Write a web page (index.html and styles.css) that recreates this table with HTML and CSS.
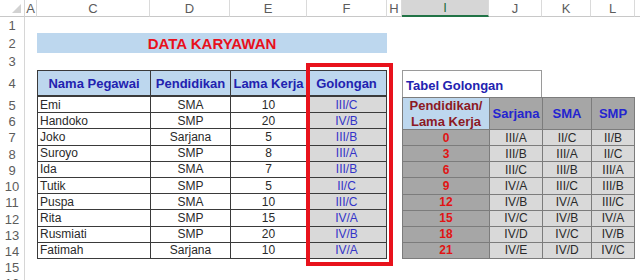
FILE: index.html
```html
<!DOCTYPE html>
<html>
<head>
<meta charset="utf-8">
<link rel="stylesheet" href="styles.css">
</head>
<body>
<div class="sheet">
  <div class="corner"><span class="tri"></span></div>
  <div class="ch">A</div>
  <div class="ch">C</div>
  <div class="ch">D</div>
  <div class="ch">E</div>
  <div class="ch">F</div>
  <div class="ch">H</div>
  <div class="ch sel">I</div>
  <div class="ch">J</div>
  <div class="ch">K</div>
  <div class="ch">L</div>
  <div class="ch rest"></div>

  <div class="rh">1</div>
  <div class="rh">2</div>
  <div class="rh">3</div>
  <div class="rh">4</div>
  <div class="rh">5</div>
  <div class="rh">6</div>
  <div class="rh">7</div>
  <div class="rh">8</div>
  <div class="rh">9</div>
  <div class="rh">10</div>
  <div class="rh">11</div>
  <div class="rh">12</div>
  <div class="rh">13</div>
  <div class="rh">14</div>
  <div class="rh">15</div>
  <div class="rh">16</div>

  <div class="title">DATA KARYAWAN</div>

  <div class="emp">
    <div class="h">Nama Pegawai</div><div class="h">Pendidikan</div><div class="h">Lama Kerja</div><div class="h">Golongan</div>
    <div class="c name">Emi</div><div class="c">SMA</div><div class="c">10</div><div class="c g">III/C</div>
    <div class="c name">Handoko</div><div class="c">SMP</div><div class="c">20</div><div class="c g">IV/B</div>
    <div class="c name">Joko</div><div class="c">Sarjana</div><div class="c">5</div><div class="c g">III/B</div>
    <div class="c name">Suroyo</div><div class="c">SMP</div><div class="c">8</div><div class="c g">III/A</div>
    <div class="c name">Ida</div><div class="c">SMA</div><div class="c">7</div><div class="c g">III/B</div>
    <div class="c name">Tutik</div><div class="c">SMP</div><div class="c">5</div><div class="c g">II/C</div>
    <div class="c name">Puspa</div><div class="c">SMA</div><div class="c">10</div><div class="c g">III/C</div>
    <div class="c name">Rita</div><div class="c">SMP</div><div class="c">15</div><div class="c g">IV/A</div>
    <div class="c name">Rusmiati</div><div class="c">SMP</div><div class="c">20</div><div class="c g">IV/B</div>
    <div class="c name">Fatimah</div><div class="c">Sarjana</div><div class="c">10</div><div class="c g">IV/A</div>
  </div>

  <div class="tg">Tabel Golongan</div>

  <div class="gol">
    <div class="hi">Pendidikan/<br>Lama Kerja</div><div class="hj">Sarjana</div><div class="hj">SMA</div><div class="hj">SMP</div>
    <div class="n">0</div><div class="v">III/A</div><div class="v">II/C</div><div class="v">II/B</div>
    <div class="n">3</div><div class="v">III/B</div><div class="v">III/A</div><div class="v">II/C</div>
    <div class="n">6</div><div class="v">III/C</div><div class="v">III/B</div><div class="v">III/A</div>
    <div class="n">9</div><div class="v">IV/A</div><div class="v">III/C</div><div class="v">III/B</div>
    <div class="n">12</div><div class="v">IV/B</div><div class="v">IV/A</div><div class="v">III/C</div>
    <div class="n">15</div><div class="v">IV/C</div><div class="v">IV/B</div><div class="v">IV/A</div>
    <div class="n">18</div><div class="v">IV/D</div><div class="v">IV/C</div><div class="v">IV/B</div>
    <div class="n">21</div><div class="v">IV/E</div><div class="v">IV/D</div><div class="v">IV/C</div>
  </div>

  <div class="mark"></div>
</div>
</body>
</html>
```

FILE: styles.css
```css
* { box-sizing: border-box; }

body {
  margin: 0;
  background: #fff;
  font-family: "Liberation Sans", Arial, sans-serif;
  overflow: hidden;
}

.sheet {
  position: relative;
  width: 640px;
  height: 280px;
  overflow: hidden;
  display: grid;
  grid-template-columns: 25px 12px 113px 80px 77px 80px 15px 87px 53px 49px 44px 1fr;
  grid-template-rows: 17px 16px 20px 17px 27px 16px 16px 17px 16px 16px 16px 17px 16px 16px 16px 16px 16px;
}

.corner {
  display: flex;
  align-items: flex-end;
  justify-content: flex-end;
  border-right: 1px solid #d6d6d6;
  border-bottom: 1px solid #c8c8c8;
}

.tri {
  width: 0;
  height: 0;
  border-left: 9px solid transparent;
  border-bottom: 9px solid #d2d2d2;
  margin: 0 3px 3px 0;
}

.ch {
  display: flex;
  align-items: center;
  justify-content: center;
  border-right: 1px solid #dadada;
  border-bottom: 1px solid #c8c8c8;
  color: #5c5c5c;
  font-size: 13px;
}

.ch.sel {
  background: #d6d6d6;
  border-bottom: 2px solid #217346;
  color: #1f6b40;
}

.ch.rest { border-right: none; }

.rh {
  grid-column: 1;
  display: flex;
  align-items: center;
  justify-content: center;
  border-right: 1px solid #d6d6d6;
  color: #5c5c5c;
  font-size: 13px;
}

.title {
  grid-column: 3 / 7;
  grid-row: 3;
  background: #bdd7ee;
  color: #e8101c;
  font-weight: bold;
  font-size: 15px;
  display: flex;
  align-items: center;
  justify-content: center;
}

.emp {
  grid-column: 3 / 7;
  grid-row: 5 / 16;
  display: grid;
  grid-template-columns: 112px 79px 75px 79px;
  grid-template-rows: 25px repeat(10, 1fr);
  gap: 1px;
  background: #3a3a3a;
  border: 1px solid #3a3a3a;
}

.emp .h {
  background: #bdd7ee;
  color: #2222b0;
  font-weight: bold;
  font-size: 13px;
  border-bottom: 1px solid #3a3a3a;
  display: flex;
  align-items: center;
  justify-content: center;
}

.emp .c {
  background: #fff;
  color: #2a2a2a;
  font-size: 12px;
  display: flex;
  align-items: center;
  justify-content: center;
}

.emp .name {
  justify-content: flex-start;
  padding-left: 2px;
}

.emp .g {
  background: #d9d9d9;
  color: #3434c8;
}

.tg {
  grid-column: 8 / 10;
  grid-row: 5;
  border: 1px solid #9a9a9a;
  border-bottom: none;
  color: #2222b0;
  font-weight: bold;
  font-size: 13px;
  display: flex;
  align-items: center;
  padding-left: 3px;
  padding-top: 2px;
}

.gol {
  grid-column: 8 / 12;
  grid-row: 6 / 16;
  display: grid;
  grid-template-columns: 86px 52px 48px 42px;
  grid-template-rows: 31px repeat(8, 1fr);
  gap: 1px;
  background: #7c7c7c;
  border: 1px solid #7c7c7c;
}

.gol > div {
  display: flex;
  align-items: center;
  justify-content: center;
  text-align: center;
}

.gol .hi {
  background: #bdd7ee;
  color: #8c1a24;
  font-weight: bold;
  font-size: 13px;
  line-height: 16px;
}

.gol .hj {
  background: #a6a6a6;
  color: #2424d0;
  font-weight: bold;
  font-size: 13px;
}

.gol .n {
  background: #a6a6a6;
  color: #e01414;
  font-weight: bold;
  font-size: 12px;
}

.gol .v {
  background: #d9d9d9;
  color: #2a2a2a;
  font-size: 12px;
}

.mark {
  position: absolute;
  left: 306px;
  top: 63px;
  width: 87px;
  height: 203px;
  border: 4px solid #e8121c;
}
```
